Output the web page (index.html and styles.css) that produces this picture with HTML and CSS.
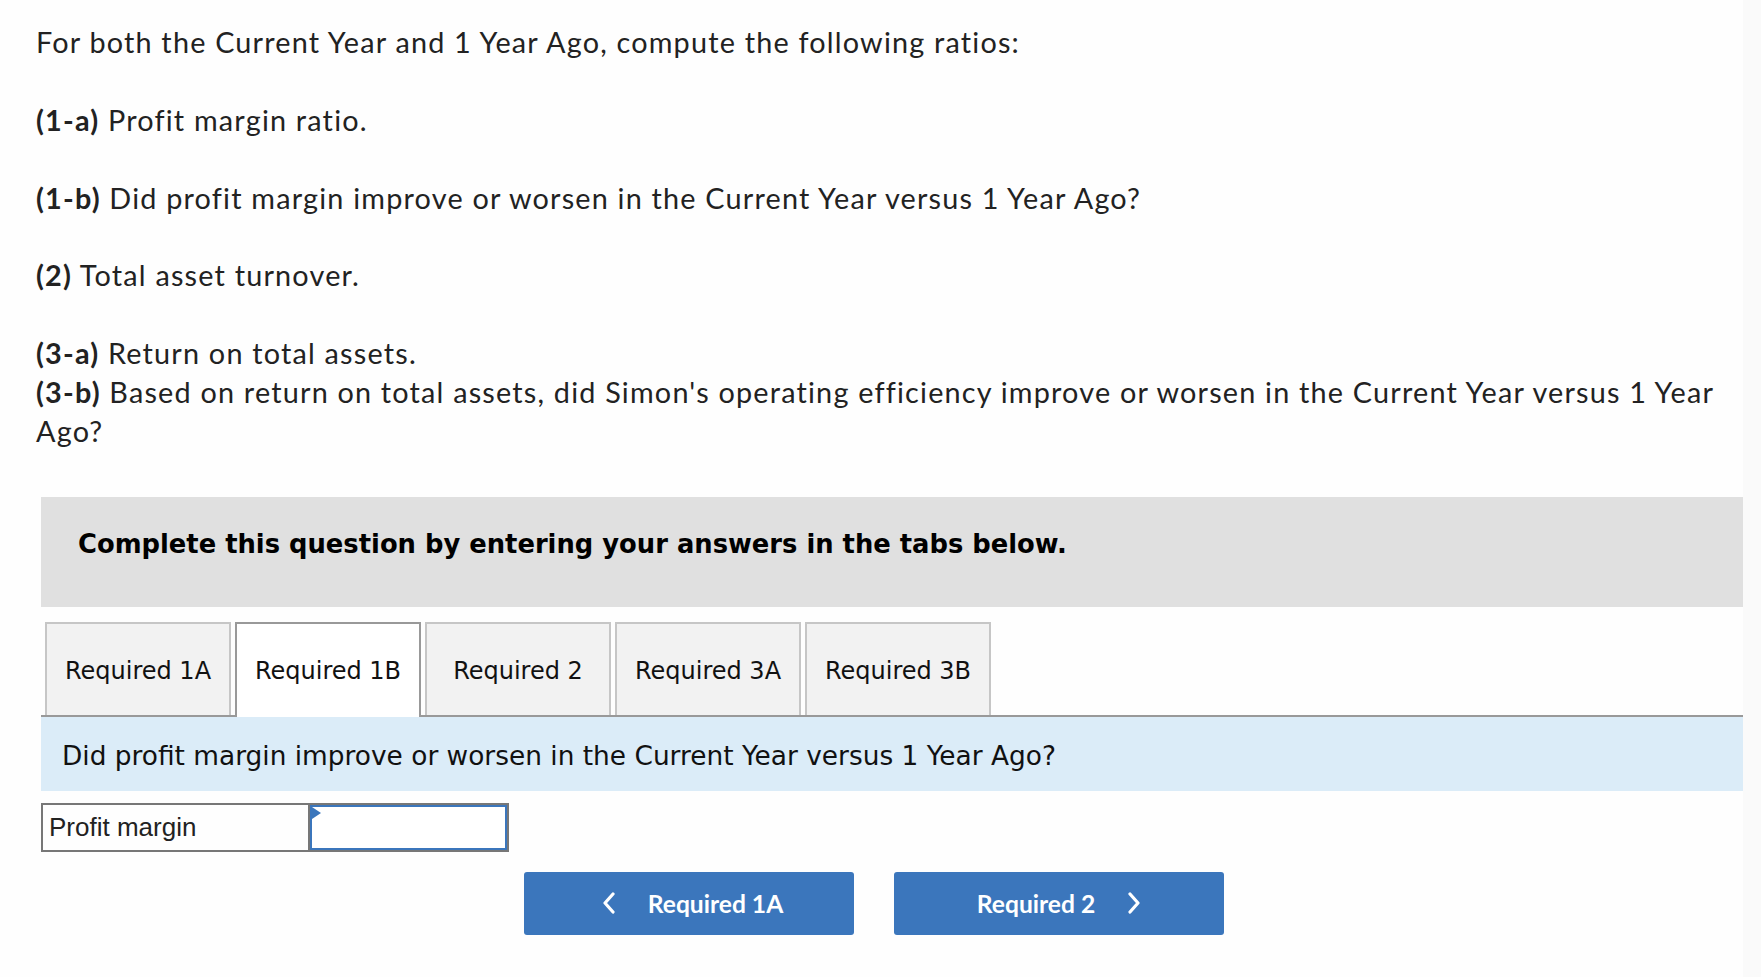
FILE: index.html
```html
<!DOCTYPE html>
<html lang="en">
<head>
<meta charset="utf-8">
<title>Ratios</title>
<link rel="stylesheet" href="styles.css">
</head>
<body>
<div class="page">
  <div class="question">
    <p>For both the Current Year and 1 Year Ago, compute the following ratios:</p>
    <p><b>(1-a)</b> Profit margin ratio.</p>
    <p><b>(1-b)</b> Did profit margin improve or worsen in the Current Year versus 1 Year Ago?</p>
    <p><b>(2)</b> Total asset turnover.</p>
    <p class="tight"><b>(3-a)</b> Return on total assets.</p>
    <p><b>(3-b)</b> Based on return on total assets, did Simon's operating efficiency improve or worsen in the Current Year versus 1 Year Ago?</p>
  </div>

  <div class="widget">
    <div class="instructions">Complete this question by entering your answers in the tabs below.</div>

    <div class="tabs">
      <div class="tab">Required 1A</div>
      <div class="tab active">Required 1B</div>
      <div class="tab">Required 2</div>
      <div class="tab">Required 3A</div>
      <div class="tab">Required 3B</div>
    </div>

    <div class="prompt">Did profit margin improve or worsen in the Current Year versus 1 Year Ago?</div>

    <div class="answer-row">
      <div class="label-cell">Profit margin</div>
      <div class="input-cell"><span class="marker"></span></div>
    </div>

    <div class="nav">
      <button class="nav-btn prev" type="button">
        <svg class="chev" width="14" height="22" viewBox="0 0 14 22"><path d="M11 2 L3 11 L11 20" fill="none" stroke="#fff" stroke-width="3.2" stroke-linecap="round" stroke-linejoin="round"/></svg>
        <span>Required 1A</span>
      </button>
      <button class="nav-btn next" type="button">
        <span>Required 2</span>
        <svg class="chev" width="14" height="22" viewBox="0 0 14 22"><path d="M3 2 L11 11 L3 20" fill="none" stroke="#fff" stroke-width="3.2" stroke-linecap="round" stroke-linejoin="round"/></svg>
      </button>
    </div>
  </div>
</div>
</body>
</html>
```
FILE: styles.css
```css
html {
  background: #fafafa;
}
body {
  margin: 0;
}
.page {
  width: 1743px;
  min-height: 977px;
  background: #fefefe;
  box-sizing: border-box;
  padding: 23px 0 0 36px;
}
.question {
  font-family: Lato, "Open Sans", sans-serif;
  font-size: 28.8px;
  letter-spacing: 1.2px;
  line-height: 38.9px;
  color: #222;
}
.question p {
  margin: 0 0 38.9px;
}
.question p.tight {
  margin-bottom: 0;
}
.question p:last-child {
  margin-bottom: 0;
}
.question b {
  font-weight: 700;
}
.widget {
  margin: 46px 0 0 5px;
  font-family: "DejaVu Sans", Verdana, sans-serif;
  color: #111;
}
.instructions {
  background: #e0e0e0;
  height: 110px;
  box-sizing: border-box;
  padding: 31px 0 0 37px;
  font-weight: 700;
  font-size: 25.8px;
  line-height: 32px;
  color: #000;
}
.tabs {
  display: flex;
  margin-top: 15px;
  padding-left: 4px;
  border-bottom: 2px solid #999;
  height: 93px;
}
.tab {
  width: 186px;
  height: 93px;
  box-sizing: border-box;
  margin-right: 4px;
  padding-top: 4px;
  background: #f2f2f2;
  border: 2px solid #c6c6c6;
  border-bottom: none;
  display: flex;
  align-items: center;
  justify-content: center;
  font-size: 24px;
  color: #111;
}
.tab.active {
  background: #fff;
  border-color: #999;
  height: 95px;
  padding-bottom: 2px;
  position: relative;
  z-index: 1;
}
.prompt {
  background: #dbecf8;
  height: 74px;
  box-sizing: border-box;
  padding: 3px 0 0 21px;
  display: flex;
  align-items: center;
  font-size: 26.4px;
  color: #111;
}
.answer-row {
  display: flex;
  margin-top: 12px;
  height: 49px;
  width: 468px;
  box-sizing: border-box;
  border: 2px solid #777;
}
.label-cell {
  width: 259px;
  border-right: 2px solid #777;
  font-family: "Liberation Sans", Arial, sans-serif;
  font-size: 26px;
  color: #222;
  padding-left: 6px;
  display: flex;
  align-items: center;
}
.input-cell {
  flex: 1;
  border: 2px solid #3b76bc;
  background: #fff;
  position: relative;
}
.marker {
  position: absolute;
  left: 0;
  top: 0;
  width: 0;
  height: 0;
  border-top: 6px solid transparent;
  border-bottom: 6px solid transparent;
  border-left: 9px solid #3b76bc;
}
.nav {
  display: flex;
  gap: 40px;
  margin-top: 20px;
  padding-left: 483px;
}
.nav-btn {
  width: 330px;
  height: 63px;
  border: none;
  border-radius: 3px;
  background: #3b76bc;
  color: #fff;
  font-family: Lato, Roboto, sans-serif;
  font-weight: 700;
  font-size: 24.6px;
  display: flex;
  align-items: center;
  justify-content: center;
  gap: 32px;
  padding: 0;
}
.nav-btn.prev {
  padding-left: 7px;
}
.chev {
  display: block;
}
```
